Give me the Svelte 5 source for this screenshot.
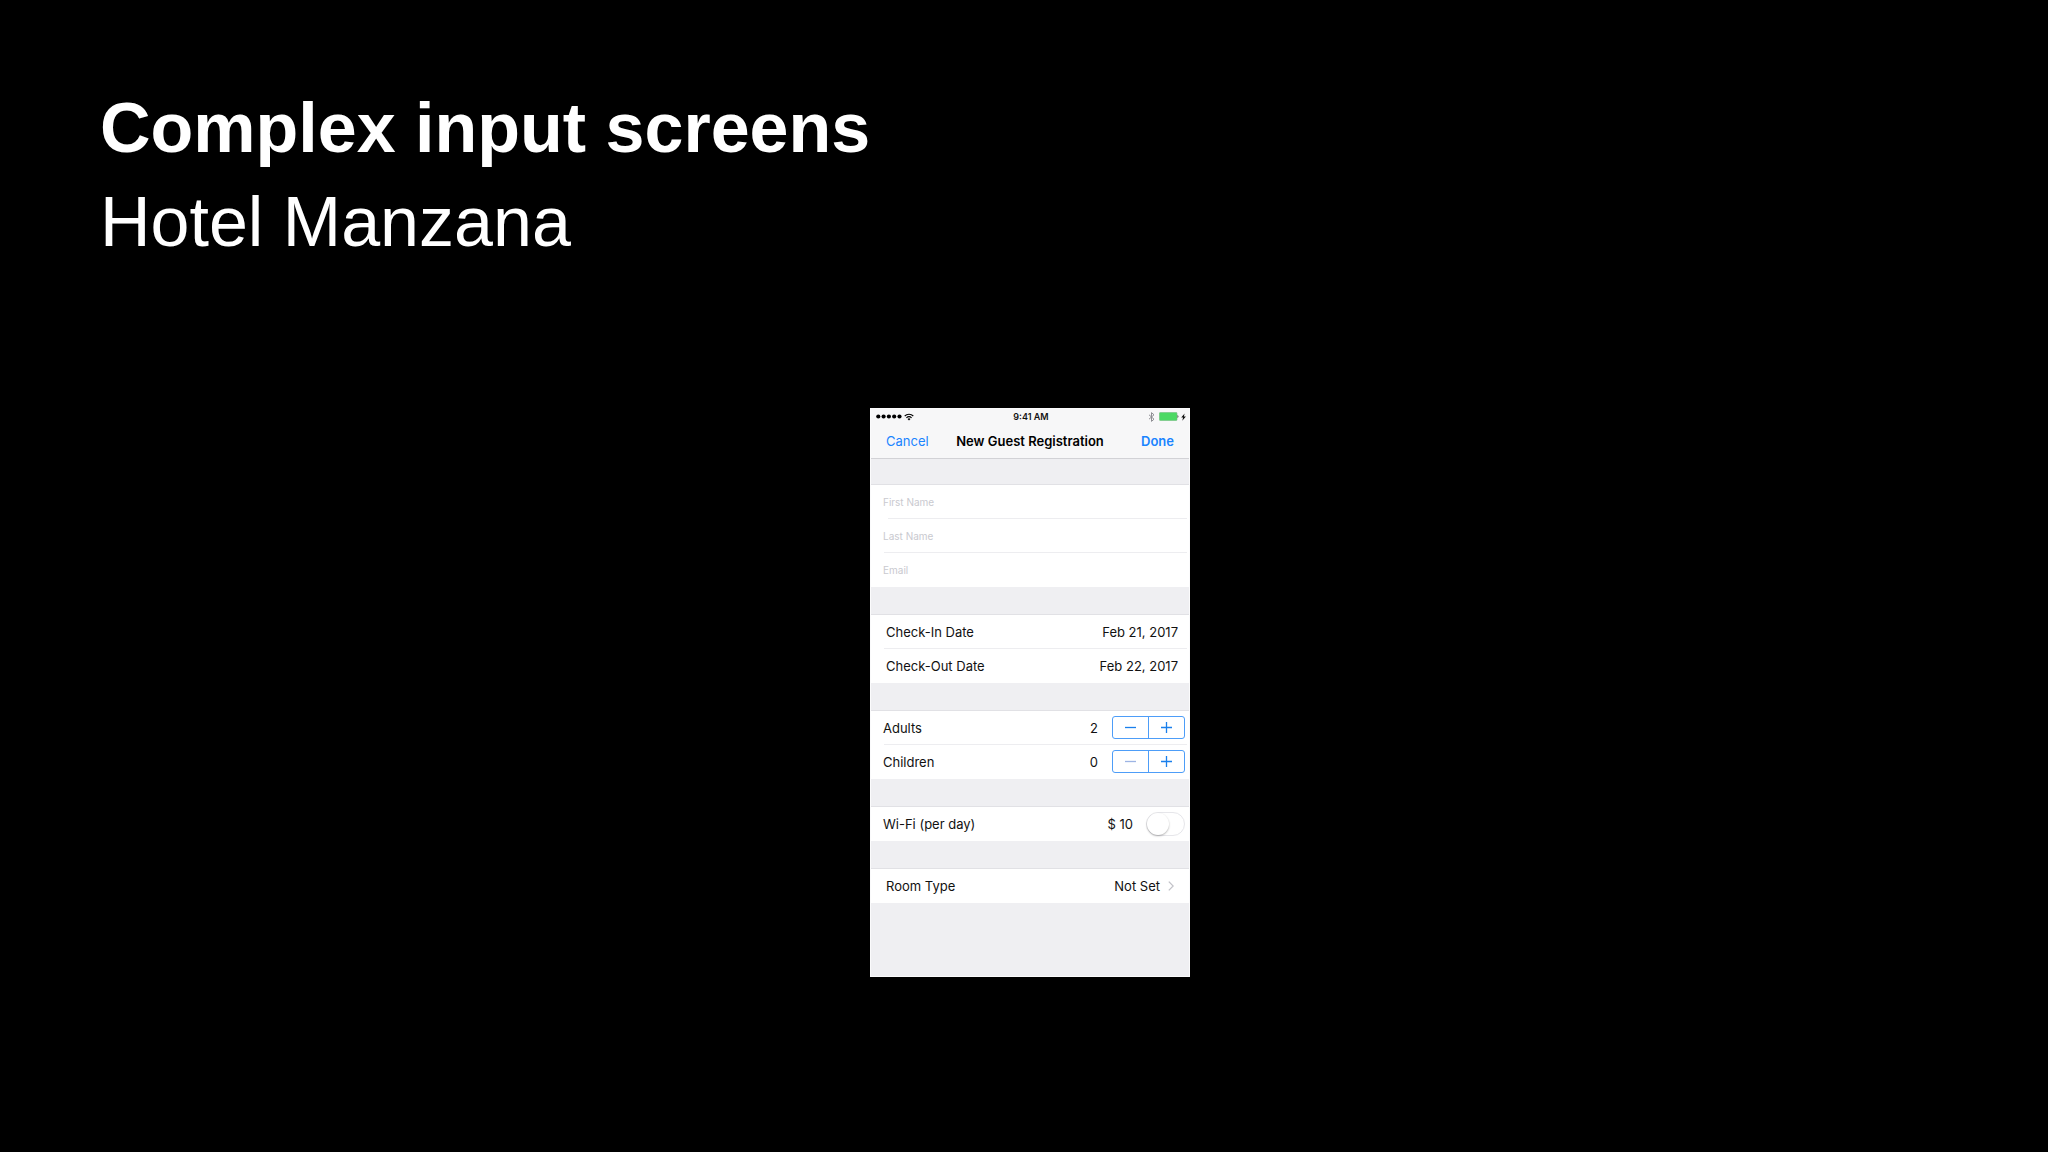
<script>
  let guest = $state({ first: '', last: '', email: '' });
  let adults = $state(2);
  let children = $state(0);
  let wifi = $state(false);
</script>

{#snippet stepper(name, value, change)}
  <div class="stepper" role="group" aria-label={name}>
    <button type="button" aria-label="Remove" disabled={value === 0} onclick={() => change(-1)}>
      <svg viewBox="0 0 11 11"><path d="M0 5.5h11" /></svg>
    </button>
    <button type="button" aria-label="Add" onclick={() => change(1)}>
      <svg viewBox="0 0 11 11"><path d="M0 5.5h11M5.5 0v11" /></svg>
    </button>
  </div>
{/snippet}

<main>
  <header class="titles">
    <h1>Complex input screens</h1>
    <p>Hotel Manzana</p>
  </header>

  <div class="stage">
    <form class="phone" onsubmit={(e) => e.preventDefault()}>
      <div class="top">
        <div class="status">
          <div class="signal">
            <svg class="dots" viewBox="0 0 26 5">
              <circle cx="2.3" cy="2.5" r="2.1" /><circle cx="7.6" cy="2.5" r="2.1" /><circle cx="12.9" cy="2.5" r="2.1" /><circle cx="18.2" cy="2.5" r="2.1" /><circle cx="23.5" cy="2.5" r="2.1" />
            </svg>
            <svg class="wifi" viewBox="0 0 10 8">
              <path d="M.7 3a6.2 6.2 0 0 1 8.6 0M2.4 4.8a3.8 3.8 0 0 1 5.2 0" />
              <path class="core" d="M3.5 6a2.2 2.2 0 0 1 3 0L5 7.6z" />
            </svg>
          </div>
          <span class="time">9:41 AM</span>
          <div class="power">
            <svg class="bluetooth" viewBox="0 0 7 10"><path d="M1 2.8l5 4.4L3.5 9.4V.6L6 2.8 1 7.2" /></svg>
            <svg class="battery" viewBox="0 0 20 9">
              <rect x=".4" y=".4" width="17.6" height="8.2" rx="1" /><path d="M18.6 3q1.6 1.5 0 3z" />
            </svg>
            <svg class="bolt" viewBox="0 0 5 8"><path d="M3.6.4L.2 4.6h1.9L1.3 7.8 4.9 3.4H2.9z" /></svg>
          </div>
        </div>
        <nav>
          <button type="button">Cancel</button>
          <h2>New Guest Registration</h2>
          <button type="submit" class="done">Done</button>
        </nav>
      </div>

      <div class="body">
        <section>
          <div class="row first"><input type="text" aria-label="First Name" placeholder="First Name" bind:value={guest.first} /></div>
          <div class="row"><input type="text" aria-label="Last Name" placeholder="Last Name" bind:value={guest.last} /></div>
          <div class="row"><input type="email" aria-label="Email" placeholder="Email" bind:value={guest.email} /></div>
        </section>

        <section>
          <button type="button" class="row link"><span>Check-In Date</span><span>Feb 21, 2017</span></button>
          <button type="button" class="row link"><span>Check-Out Date</span><span>Feb 22, 2017</span></button>
        </section>

        <section>
          <div class="row">
            <span>Adults</span><output>{adults}</output>
            {@render stepper('Adults', adults, (d) => (adults += d))}
          </div>
          <div class="row">
            <span>Children</span><output>{children}</output>
            {@render stepper('Children', children, (d) => (children += d))}
          </div>
        </section>

        <section>
          <label class="row">
            <span>Wi-Fi (per day)</span><span class="price">$ 10</span>
            <input class="switch" type="checkbox" bind:checked={wifi} />
          </label>
        </section>

        <section>
          <button type="button" class="row link room">
            <span>Room Type</span><span>Not Set</span>
            <svg class="chevron" viewBox="0 0 6 10"><path d="M.8 .6L5.2 5 .8 9.4" /></svg>
          </button>
        </section>
      </div>
    </form>
  </div>
</main>

<style>
  :global(body) {
    margin: 0;
    background: #000;
  }
  * {
    box-sizing: border-box;
  }
  main {
    min-height: 100vh;
    padding: 88px 0 64px;
    background: #000;
    color: #fff;
    font-family: 'Liberation Sans', Arial, sans-serif;
  }
  .titles {
    padding: 0 100px;
  }
  h1,
  .titles p {
    margin: 0;
    font-size: 70px;
    line-height: 80px;
    font-weight: 700;
  }
  .titles p {
    margin-top: 14px;
    font-weight: 400;
  }
  .stage {
    display: flex;
    justify-content: center;
    padding: 146px 0 0 12px;
  }
  .phone {
    width: 320px;
    display: flex;
    flex-direction: column;
    border: 1px solid #fbfbfc;
    background: #efeff2;
    color: #111;
    font-family: Inter, 'Liberation Sans', sans-serif;
    font-size: 13px;
    line-height: 18px;
  }
  button,
  input {
    margin: 0;
    padding: 0;
    border: 0;
    background: none;
    color: inherit;
    font: inherit;
  }
  svg {
    display: block;
    fill: none;
  }
  .top {
    background: #f7f7f8;
    border-bottom: 1px solid #d2d2d6;
  }
  .status {
    display: grid;
    grid-template-columns: 1fr auto 1fr;
    align-items: center;
    height: 15px;
    padding: 0 3px 0 5px;
  }
  .signal,
  .power {
    display: flex;
    align-items: center;
    gap: 2px;
  }
  .power {
    justify-content: flex-end;
  }
  .dots {
    width: 26px;
    height: 5px;
    fill: #000;
  }
  .wifi {
    width: 10px;
    height: 8px;
    stroke: #000;
    stroke-width: 1.1;
  }
  .core {
    fill: #000;
    stroke: none;
  }
  .time {
    color: #111;
    font-size: 9px;
    line-height: 15px;
    font-weight: 600;
  }
  .bluetooth {
    width: 7px;
    height: 10px;
    stroke: #8e8e93;
    stroke-width: 1;
  }
  .battery {
    width: 20px;
    height: 9px;
    margin-left: 2px;
  }
  .battery rect {
    fill: #4cd964;
    stroke: #6cb878;
    stroke-width: 0.6;
  }
  .battery path,
  .bolt {
    fill: #111;
  }
  .bolt {
    width: 5px;
    height: 8px;
  }
  nav {
    display: grid;
    grid-template-columns: 1fr auto 1fr;
    align-items: center;
    height: 34px;
    padding: 0 15px;
  }
  nav button {
    justify-self: start;
    color: #1a84ff;
  }
  nav .done {
    justify-self: end;
    font-weight: 600;
  }
  h2 {
    margin: 0;
    color: #000;
    font-size: 13px;
    line-height: 18px;
    font-weight: 600;
  }
  .body {
    display: flex;
    flex-direction: column;
    gap: 28px;
    padding: 26px 0 73px;
  }
  section {
    background: #fff;
    box-shadow: 0 -1px #e1e1e5;
  }
  .row {
    position: relative;
    display: flex;
    align-items: center;
    width: 100%;
    height: 34px;
    padding: 0 4px 1px 12px;
    text-align: left;
  }
  .row:not(:last-child)::after {
    content: '';
    position: absolute;
    right: 2px;
    bottom: 0;
    left: 13px;
    height: 1px;
    background: #ededf0;
  }
  .row.first::after {
    left: 17px;
  }
  .row > span:first-child {
    flex: 1;
  }
  .link {
    padding: 0 11px 0 15px;
  }
  .row input[type='text'],
  .row input[type='email'] {
    width: 100%;
    height: 100%;
    font-size: 10px;
    outline: none;
  }
  input::placeholder {
    color: #c9c9cf;
    opacity: 1;
  }
  .stepper {
    display: flex;
    width: 73px;
    height: 23px;
    margin-left: 14px;
    border: 1px solid #4d9df8;
    border-radius: 3px;
  }
  .stepper button {
    flex: none;
    display: grid;
    place-items: center;
    width: 35px;
    color: #1a7fec;
  }
  .stepper button + button {
    width: 36px;
    border-left: 1px solid #4d9df8;
  }
  .stepper button:disabled {
    color: #9db4e4;
  }
  .stepper svg {
    width: 11px;
    height: 11px;
    stroke: currentColor;
    stroke-width: 1.3;
  }
  .switch {
    appearance: none;
    flex: none;
    width: 39px;
    height: 24px;
    margin-left: 13px;
    border: 1px solid #e6e6ea;
    border-radius: 12px;
    background: #fff;
  }
  .switch::before {
    content: '';
    display: block;
    width: 22px;
    height: 22px;
    border-radius: 50%;
    background: #fff;
    box-shadow: 0 1px 2px #0000004d;
  }
  .switch:checked {
    background: #4cd964;
  }
  .switch:checked::before {
    margin-left: 15px;
  }
  .room {
    padding-right: 15px;
  }
  .chevron {
    width: 6px;
    height: 10px;
    margin-left: 8px;
    stroke: #c2c2c8;
    stroke-width: 1.3;
  }
</style>
